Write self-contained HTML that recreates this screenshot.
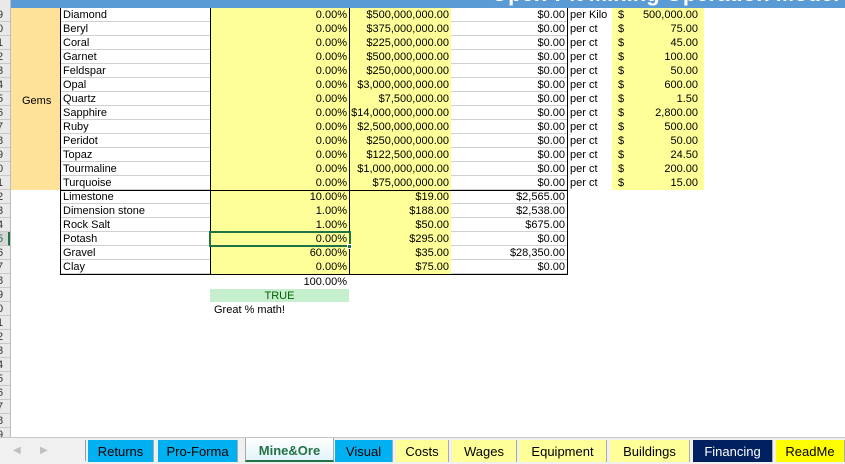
<!DOCTYPE html>
<html><head><meta charset="utf-8"><style>
*{margin:0;padding:0;box-sizing:border-box}
body{width:845px;height:464px;overflow:hidden;background:#fff;font-family:"Liberation Sans",sans-serif;font-size:11px;color:#000;position:relative}
.a{position:absolute}
.hdr{left:0;top:0;width:11px;height:438px;background:#e9e9e9;border-right:1px solid #bdbdbd}
.rn{position:absolute;left:0;width:10px;height:14px;border-bottom:1px solid #c8c8c8;font-size:11px;line-height:15px;text-indent:-3px;color:#333;overflow:hidden}
.row{position:absolute;left:11px;height:14px;display:flex;line-height:15px;white-space:nowrap}
.row span{display:block;height:14px;overflow:hidden}
.b{width:49px}
.c{width:150px;border-bottom:1px solid #d0d0d0;padding-left:3px}
.d{width:140px;text-align:right;padding-right:3px;background:#ffff99}
.e{width:101px;text-align:right;padding-right:2px;background:#ffff99}
.f{width:116px;text-align:right;padding-right:2px;border-bottom:1px solid #d0d0d0}
.g{width:45px;padding-left:3px}
.h{width:92px;background:#ffff99;padding-left:6px;position:relative}
.h i{font-style:normal;position:absolute;right:6px;top:0}
.or{background:#ffe299}
.vl{position:absolute;width:1px;background:#000}
.hl{position:absolute;height:1px;background:#000}
.tab{position:absolute;top:440px;height:22px;line-height:23px;text-align:center;font-size:13px;border-right:1px solid #aaa}
</style></head><body>
<div class="a" style="left:11px;top:0;width:834px;height:8px;background:#5b9bd5;overflow:hidden">
<div class="a" style="left:480px;top:-19px;color:#fff;font-weight:bold;font-size:22px;white-space:nowrap">Open-Pit Mining Operation Model</div></div>
<div class="a hdr"></div>
<div class="rn" style="top:8px">9</div><div class="rn" style="top:22px">0</div><div class="rn" style="top:36px">1</div><div class="rn" style="top:50px">2</div><div class="rn" style="top:64px">3</div><div class="rn" style="top:78px">4</div><div class="rn" style="top:92px">5</div><div class="rn" style="top:106px">6</div><div class="rn" style="top:120px">7</div><div class="rn" style="top:134px">8</div><div class="rn" style="top:148px">9</div><div class="rn" style="top:162px">0</div><div class="rn" style="top:176px">1</div><div class="rn" style="top:190px">2</div><div class="rn" style="top:204px">3</div><div class="rn" style="top:218px">4</div><div class="rn" style="top:232px;color:#217346;border-right:2px solid #217346;background:#d6d6d6">5</div><div class="rn" style="top:246px">6</div><div class="rn" style="top:260px">7</div><div class="rn" style="top:274px">8</div><div class="rn" style="top:288px">9</div><div class="rn" style="top:302px">0</div><div class="rn" style="top:316px">1</div><div class="rn" style="top:330px">2</div><div class="rn" style="top:344px">3</div><div class="rn" style="top:358px">4</div><div class="rn" style="top:372px">5</div><div class="rn" style="top:386px">6</div><div class="rn" style="top:400px">7</div><div class="rn" style="top:414px">8</div><div class="rn" style="top:428px">9</div>

<div class="row" style="top:8px"><span class="b or"></span><span class="c">Diamond</span><span class="d">0.00%</span><span class="e">$500,000,000.00</span><span class="f">$0.00</span><span class="g">per Kilo</span><span class="h">$<i>500,000.00</i></span></div>
<div class="row" style="top:22px"><span class="b or"></span><span class="c">Beryl</span><span class="d">0.00%</span><span class="e">$375,000,000.00</span><span class="f">$0.00</span><span class="g">per ct</span><span class="h">$<i>75.00</i></span></div>
<div class="row" style="top:36px"><span class="b or"></span><span class="c">Coral</span><span class="d">0.00%</span><span class="e">$225,000,000.00</span><span class="f">$0.00</span><span class="g">per ct</span><span class="h">$<i>45.00</i></span></div>
<div class="row" style="top:50px"><span class="b or"></span><span class="c">Garnet</span><span class="d">0.00%</span><span class="e">$500,000,000.00</span><span class="f">$0.00</span><span class="g">per ct</span><span class="h">$<i>100.00</i></span></div>
<div class="row" style="top:64px"><span class="b or"></span><span class="c">Feldspar</span><span class="d">0.00%</span><span class="e">$250,000,000.00</span><span class="f">$0.00</span><span class="g">per ct</span><span class="h">$<i>50.00</i></span></div>
<div class="row" style="top:78px"><span class="b or"></span><span class="c">Opal</span><span class="d">0.00%</span><span class="e">$3,000,000,000.00</span><span class="f">$0.00</span><span class="g">per ct</span><span class="h">$<i>600.00</i></span></div>
<div class="row" style="top:92px"><span class="b or"></span><span class="c">Quartz</span><span class="d">0.00%</span><span class="e">$7,500,000.00</span><span class="f">$0.00</span><span class="g">per ct</span><span class="h">$<i>1.50</i></span></div>
<div class="row" style="top:106px"><span class="b or"></span><span class="c">Sapphire</span><span class="d">0.00%</span><span class="e">$14,000,000,000.00</span><span class="f">$0.00</span><span class="g">per ct</span><span class="h">$<i>2,800.00</i></span></div>
<div class="row" style="top:120px"><span class="b or"></span><span class="c">Ruby</span><span class="d">0.00%</span><span class="e">$2,500,000,000.00</span><span class="f">$0.00</span><span class="g">per ct</span><span class="h">$<i>500.00</i></span></div>
<div class="row" style="top:134px"><span class="b or"></span><span class="c">Peridot</span><span class="d">0.00%</span><span class="e">$250,000,000.00</span><span class="f">$0.00</span><span class="g">per ct</span><span class="h">$<i>50.00</i></span></div>
<div class="row" style="top:148px"><span class="b or"></span><span class="c">Topaz</span><span class="d">0.00%</span><span class="e">$122,500,000.00</span><span class="f">$0.00</span><span class="g">per ct</span><span class="h">$<i>24.50</i></span></div>
<div class="row" style="top:162px"><span class="b or"></span><span class="c">Tourmaline</span><span class="d">0.00%</span><span class="e">$1,000,000,000.00</span><span class="f">$0.00</span><span class="g">per ct</span><span class="h">$<i>200.00</i></span></div>
<div class="row" style="top:176px"><span class="b or"></span><span class="c">Turquoise</span><span class="d">0.00%</span><span class="e">$75,000,000.00</span><span class="f">$0.00</span><span class="g">per ct</span><span class="h">$<i>15.00</i></span></div>
<div class="row" style="top:190px"><span class="b"></span><span class="c">Limestone</span><span class="d">10.00%</span><span class="e">$19.00</span><span class="f">$2,565.00</span></div>
<div class="row" style="top:204px"><span class="b"></span><span class="c">Dimension stone</span><span class="d">1.00%</span><span class="e">$188.00</span><span class="f">$2,538.00</span></div>
<div class="row" style="top:218px"><span class="b"></span><span class="c">Rock Salt</span><span class="d">1.00%</span><span class="e">$50.00</span><span class="f">$675.00</span></div>
<div class="row" style="top:232px"><span class="b"></span><span class="c">Potash</span><span class="d">0.00%</span><span class="e">$295.00</span><span class="f">$0.00</span></div>
<div class="row" style="top:246px"><span class="b"></span><span class="c">Gravel</span><span class="d">60.00%</span><span class="e">$35.00</span><span class="f">$28,350.00</span></div>
<div class="row" style="top:260px"><span class="b"></span><span class="c">Clay</span><span class="d">0.00%</span><span class="e">$75.00</span><span class="f">$0.00</span></div>
<div class="a" style="left:22px;top:94px;line-height:15px">Gems</div>

<div class="vl" style="left:60px;top:8px;height:267px"></div>
<div class="vl" style="left:210px;top:8px;height:267px"></div>
<div class="vl" style="left:349px;top:8px;height:267px"></div>
<div class="vl" style="left:567px;top:8px;height:267px"></div>
<div class="hl" style="left:60px;top:190px;width:508px"></div>
<div class="hl" style="left:60px;top:274px;width:508px"></div>
<div class="a" style="left:209px;top:231px;width:142px;height:16px;border:2px solid #217346"></div>
<div class="a" style="left:347px;top:244px;width:5px;height:5px;background:#217346;border:1px solid #fff"></div>

<div class="a" style="left:210px;top:275px;width:137px;text-align:right;line-height:15px">100.00%</div>
<div class="a" style="left:210px;top:289px;width:139px;height:13px;background:#c6efce;color:#006100;text-align:center;line-height:14px">TRUE</div>
<div class="a" style="left:214px;top:303px;line-height:15px">Great % math!</div>

<div class="a" style="left:0;top:437px;width:845px;height:27px;background:#f0f0f0;border-top:1px solid #c6c6c6"></div>
<div class="a" style="left:13px;top:445px;color:#c0c0c0;font-size:10px">&#9664;</div>
<div class="a" style="left:40px;top:445px;color:#c0c0c0;font-size:10px">&#9654;</div>
<div class="a" style="left:85px;top:440px;width:1px;height:21px;background:#999"></div>
<div class="tab" style="left:88px;width:66px;background:#00b0f0">Returns</div>
<div class="tab" style="left:158px;width:80px;background:#00b0f0">Pro-Forma</div>
<div class="tab" style="left:245px;width:89px;top:438px;height:24px;line-height:25px;background:linear-gradient(#fff,#e3f4fb);color:#217346;font-weight:bold;border-bottom:2px solid #217346;border-left:1px solid #aaa">Mine&amp;Ore</div>
<div class="tab" style="left:335px;width:58px;background:#00b0f0">Visual</div>
<div class="tab" style="left:396px;width:53px;background:#ffff99">Costs</div>
<div class="tab" style="left:452px;width:65px;background:#ffff99">Wages</div>
<div class="tab" style="left:519px;width:88px;background:#ffff99">Equipment</div>
<div class="tab" style="left:610px;width:80px;background:#ffff99">Buildings</div>
<div class="tab" style="left:693px;width:80px;background:#002060;color:#fff">Financing</div>
<div class="tab" style="left:776px;width:69px;background:#ffff00">ReadMe</div>
</body></html>
